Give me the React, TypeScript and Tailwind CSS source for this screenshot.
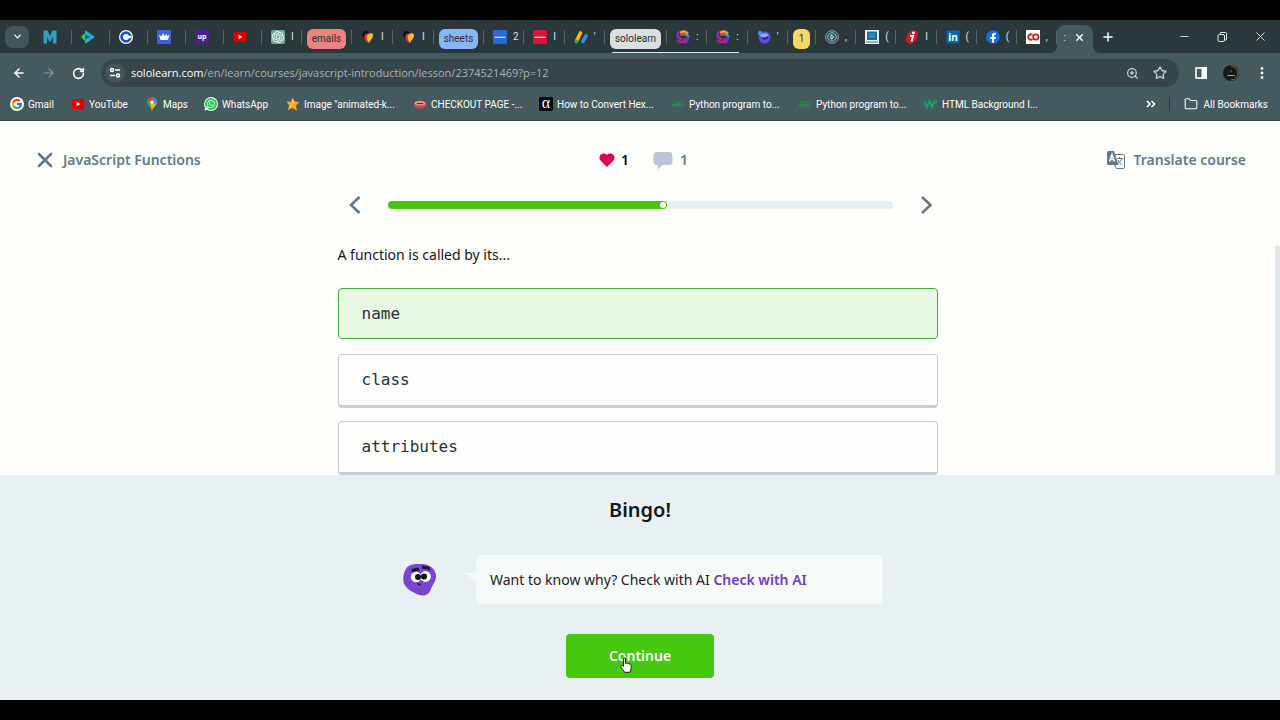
import React, { useState } from "react";
import {
  ArrowLeft,
  ArrowRight,
  ChevronDown,
  Folder,
  Minus,
  Plus,
  RotateCw,
  Star,
  X,
  ZoomIn,
} from "lucide-react";
import { FcGoogle } from "react-icons/fc";
import { FaFacebook, FaWhatsapp } from "react-icons/fa";
import { SiGeeksforgeeks, SiOpenai } from "react-icons/si";

interface Tab {
  id: string;
  icon: React.ReactNode;
  title?: string;
}

interface Bookmark {
  label: string;
  icon: React.ReactNode;
  width: string;
}

const YoutubeIcon = () => (
  <svg className="h-3.5 w-3.5" viewBox="0 0 14 14">
    <rect x="0.5" y="2" width="13" height="10" rx="2" fill="#e00000" />
    <path d="M5.6 4.8v4.4L9.4 7z" fill="#fff" />
  </svg>
);

const SololearnIcon = () => (
  <svg className="h-4 w-4" viewBox="0 0 16 16" fill="none" strokeWidth="2.8">
    <path d="M9.500 5.200C12 4.500 14 6 14.300 8.500" stroke="#2f9be8" />
    <path d="M4.500 3.200C7.500.8 11.500 1.200 13.500 4.300" stroke="#f5a030" />
    <path d="M3 2.500C.5 6 2.500 10.300 6.500 10.300" stroke="#8a2fc0" />
    <path d="M5.500 6.500c.8-2 3-2.500 4.500-1.500" stroke="#e8403c" />
    <path d="M13.500 8c1 3.500-1.500 6.300-4.500 6.300" stroke="#6a35dd" />
    <path d="M10 9.500c1 4-5.500 6-8.500 2" stroke="#c21c7e" />
  </svg>
);

const FlameIcon = () => (
  <svg className="h-3.5 w-3.5" viewBox="0 0 14 14">
    <path d="M2 2c2.500-2.500 5-1 6 1.500L5 9.500C2 8 0 5 2 2z" fill="#111" />
    <path d="M3.500 6c.5-2 3-3 5-2L8 13C5 12 3 9 3.500 6z" fill="#e2402f" />
    <path d="M6 6.500C7 3.500 9.500 2.500 12 4c.5 3.500-2 5.500-4 9C6.800 11 5.500 9 6 6.500z" fill="#f6b93f" />
  </svg>
);

const pinnedTabs: Tab[] = [
  {
    id: "m",
    icon: (
      <svg className="h-3.5 w-3.5" viewBox="0 0 14 14">
        <path d="M.5.500h4L7 6l2.500-5.500h4v13H10V7l-3 5.500L4 7v6.500H.5z" fill="#2f9fc4" />
      </svg>
    ),
  },
  {
    id: "play",
    icon: (
      <svg className="h-3.5 w-3.5" viewBox="0 0 14 14">
        <path d="M4 0l10 7-10 7z" fill="#2ea9cf" />
        <path d="M4 3v8L0 7z" fill="#2fd455" />
        <path d="M4 4.500L9 7 4 9.500z" fill="#14627a" />
      </svg>
    ),
  },
  {
    id: "coinbase",
    icon: (
      <svg className="h-3.5 w-3.5" viewBox="0 0 14 14">
        <circle cx="7" cy="7" r="7" fill="#fff" />
        <circle cx="7" cy="7" r="4.400" fill="none" stroke="#1652c8" strokeWidth="2.800" />
        <path d="M8 5.800h4.500v2.400H8z" fill="#fff" />
      </svg>
    ),
  },
  {
    id: "crown",
    icon: (
      <svg className="h-3.5 w-3.5" viewBox="0 0 14 14">
        <rect width="14" height="14" rx="1" fill="#3c64d8" />
        <path d="M2 4.500l2.500 2L6 3l1.500 3 2-2 .5 2.500 2.500-2L11 10H3.500z" fill="#fff" />
      </svg>
    ),
  },
  {
    id: "up",
    icon: (
      <svg className="h-3.5 w-3.5" viewBox="0 0 14 14">
        <rect width="14" height="14" rx="1" fill="#4d2083" />
        <text x="7" y="9" fill="#fff" fontSize="7" fontWeight="700" textAnchor="middle" fontFamily="Open Sans, sans-serif">
          up
        </text>
      </svg>
    ),
  },
  { id: "yt", icon: <YoutubeIcon /> },
];

const emailTabs: Tab[] = [
  { id: "e1", icon: <FlameIcon />, title: "I" },
  { id: "e2", icon: <FlameIcon />, title: "I" },
];

const sheetTabs: Tab[] = [
  {
    id: "s1",
    icon: (
      <svg className="h-3.5 w-3.5" viewBox="0 0 14 14">
        <rect width="14" height="14" rx="1" fill="#2868d8" />
        <path d="M1.500 7.300h11" stroke="#dfe9fb" strokeWidth="1.200" />
      </svg>
    ),
    title: "2",
  },
  {
    id: "s2",
    icon: (
      <svg className="h-3.5 w-3.5" viewBox="0 0 14 14">
        <rect width="14" height="14" rx="1" fill="#d9143f" />
        <path d="M1.500 7.300h11" stroke="#fbdfe6" strokeWidth="1.200" />
      </svg>
    ),
    title: "I",
  },
  {
    id: "s3",
    icon: (
      <svg className="h-3.5 w-3.5" viewBox="0 0 14 14" strokeLinecap="round" strokeWidth="3.600">
        <path d="M2.500 11l4-8" stroke="#fbbc04" />
        <path d="M9 11.500l3-5.500" stroke="#4285f4" />
        <circle cx="2.500" cy="11.500" r="1.900" fill="#34a853" />
      </svg>
    ),
    title: "'",
  },
];

const sololearnTabs: Tab[] = [
  { id: "l1", icon: <SololearnIcon />, title: ":" },
  { id: "l2", icon: <SololearnIcon />, title: ":" },
  {
    id: "l3",
    icon: (
      <svg className="h-3.5 w-3.5" viewBox="0 0 14 14">
        <circle cx="7.500" cy="7.500" r="6" fill="#5b4fe0" />
        <circle cx="3" cy="3" r="2.200" fill="#4a8df0" />
        <path d="M3 5.500C5 3 9 2.500 11.500 4.500 10 7.500 5 8 3 5.500z" fill="#79b4ff" />
        <path d="M4.500 7.500c2 1 4.500.5 6.500-1 .5 3.500-5.500 4.500-6.500 1z" fill="#2b1b80" />
      </svg>
    ),
    title: "'",
  },
];

const otherTabs: Tab[] = [
  {
    id: "o1",
    icon: (
      <svg className="h-3.5 w-3.5" viewBox="0 0 14 14" fill="none">
        <circle cx="7" cy="7" r="6.300" stroke="#8fb2b9" />
        <circle cx="7" cy="7" r="4.200" fill="#1d5566" stroke="#9fc8d0" />
        <path d="M6 5v4c3 .3 3-4.300 0-4z" stroke="#e2f0f2" />
      </svg>
    ),
    title: ",",
  },
  {
    id: "o2",
    icon: (
      <svg className="h-3.5 w-3.5" viewBox="0 0 14 14">
        <rect width="14" height="14" fill="#e9f1f5" />
        <rect x="2" y="1.500" width="10" height="8.500" fill="#176da8" />
        <path d="M4 4h6M4 6.500h6" stroke="#5c9dc9" />
        <path d="M1 12h12" stroke="#2b7cb4" />
      </svg>
    ),
    title: "(",
  },
  {
    id: "o3",
    icon: (
      <svg className="h-3.5 w-3.5" viewBox="0 0 14 14">
        <ellipse cx="7" cy="7" rx="5.200" ry="7.400" transform="rotate(35 7 7)" fill="#cc1c22" />
        <path d="M5 6h3l-1.500 5.500" fill="none" stroke="#fff" strokeWidth="2" />
        <circle cx="8.500" cy="3" r="1.400" fill="#fff" />
      </svg>
    ),
    title: "I",
  },
  {
    id: "in",
    icon: (
      <svg className="h-3.5 w-3.5" viewBox="0 0 14 14">
        <rect x="0.5" y="0.5" width="13" height="13" rx="1" fill="#0a66b8" />
        <text x="7" y="11" fill="#fff" fontSize="10" fontWeight="700" textAnchor="middle" fontFamily="Open Sans, sans-serif">
          in
        </text>
      </svg>
    ),
    title: "(",
  },
  {
    id: "fb",
    icon: (
      <svg className="h-3.5 w-3.5" viewBox="0 0 14 14">
        <circle cx="7" cy="7" r="6" fill="#fff" />
        <FaFacebook size={14} color="#1769e0" />
      </svg>
    ),
    title: "(",
  },
  {
    id: "co",
    icon: (
      <svg className="h-3.5 w-3.5" viewBox="0 0 14 14" fill="none">
        <rect width="14" height="14" fill="#fff" />
        <path d="M6.500 4.800a2.700 2.700 0 1 0 0 4.400" stroke="#cf2028" strokeWidth="1.800" />
        <circle cx="9.800" cy="7" r="2.700" stroke="#cf2028" strokeWidth="1.800" />
      </svg>
    ),
    title: ",",
  },
];

const bookmarks: Bookmark[] = [
  {
    label: "Gmail",
    width: "w-[61px]",
    icon: (
      <span className="rounded-full bg-white p-px">
        <FcGoogle className="h-3 w-3" />
      </span>
    ),
  },
  { label: "YouTube", width: "w-[74px]", icon: <YoutubeIcon /> },
  {
    label: "Maps",
    width: "w-[59px]",
    icon: (
      <svg className="h-3.5 w-3.5" viewBox="0 0 14 14">
        <path d="M7 .5C4 .5 2.200 2.700 2.200 5.200c0 3.300 3.300 4.300 4.800 8.300z" fill="#34a853" />
        <path d="M7 .5c3 0 4.800 2.200 4.800 4.700 0 3.300-3.300 4.300-4.800 8.300L5.500 8z" fill="#fbbc04" />
        <path d="M7 .5C5 .5 3.500 1.300 2.800 2.800L6 5.500l3-4.600z" fill="#ea4335" />
        <path d="M9 .9C11 1.600 12 3.600 11.700 6L8 7l-1-3z" fill="#4285f4" />
        <circle cx="7" cy="5.200" r="1.700" fill="#fff" />
      </svg>
    ),
  },
  {
    label: "WhatsApp",
    width: "w-[82px]",
    icon: (
      <svg className="h-3.5 w-3.5" viewBox="0 0 14 14">
        <circle cx="7" cy="7" r="7" fill="#f2fff5" />
        <circle cx="7" cy="7" r="6" fill="#2fc655" />
        <path d="M.5 13.500l1-4 3 3z" fill="#f2fff5" />
        <FaWhatsapp x="2.500" y="2.500" size={9} color="#fff" />
      </svg>
    ),
  },
  {
    label: "Image \"animated-k...",
    width: "w-[127px]",
    icon: (
      <svg className="h-3.5 w-3.5" viewBox="0 0 14 14">
        <path d="M6.500.5l2 4 5 .5-3.500 3.500 1 5-4.500-2.500L2 13l1-4.500L.5 4.500l4.500.200z" fill="#f9a825" />
        <path d="M6.500 3l1 3-3.500 4" stroke="#ffe07a" fill="none" />
      </svg>
    ),
  },
  {
    label: "CHECKOUT PAGE -...",
    width: "w-[126px]",
    icon: (
      <svg className="h-3.5 w-3.5" viewBox="0 0 14 14">
        <ellipse cx="7" cy="7.500" rx="6.500" ry="4" fill="#d7464f" />
        <ellipse cx="7" cy="6.200" rx="5" ry="2" fill="#f3b8b8" />
        <path d="M3.500 6.500h7" stroke="#a01824" strokeWidth="1.500" />
      </svg>
    ),
  },
  {
    label: "How to Convert Hex...",
    width: "w-[132px]",
    icon: (
      <span className="h-3.5 w-3.5 rounded-xs bg-black text-center font-['Liberation_Serif',serif] text-base leading-[12px]">
        α
      </span>
    ),
  },
  {
    label: "Python program to...",
    width: "w-[127px]",
    icon: <SiGeeksforgeeks className="h-3 w-3 text-[#2f8d46]" />,
  },
  {
    label: "Python program to...",
    width: "w-[126px]",
    icon: <SiGeeksforgeeks className="h-3 w-3 text-[#2f8d46]" />,
  },
  {
    label: "HTML Background I...",
    width: "w-[120px]",
    icon: (
      <svg className="h-3.5 w-3.5" viewBox="0 0 14 14" fill="none" stroke="#12a56a">
        <path d="M0 4l3 6 2.500-6L8 10l2.500-6" strokeWidth="2" />
        <path d="M11 3h2l-1 1.500c1.500 0 1.500 2-.5 1.800" />
      </svg>
    ),
  },
];

const TabGroup: React.FC<{ tabs: Tab[]; className: string }> = ({ tabs, className }) => (
  <div className={`grid h-full shrink-0 ${className}`}>
    {tabs.map((tab) => (
      <button
        key={tab.id}
        aria-label={`Tab ${tab.id}`}
        className="relative flex items-center gap-1.5 pl-[9px] text-[10px] text-[#dfe6e7]"
      >
        <span className="flex w-3.5 shrink-0 justify-center">{tab.icon}</span>
        {tab.title && <span>{tab.title}</span>}
        <span className="absolute right-0 h-3.5 w-px bg-[#566466]" />
      </button>
    ))}
  </div>
);

const GroupLabel: React.FC<{ name: string; className: string; underline?: boolean }> = ({
  name,
  className,
  underline,
}) => (
  <div className="relative flex h-full shrink-0 items-center pt-1 pr-1.5 pl-[5px]">
    <button className={`h-5 rounded-md text-center text-[10px] leading-5 text-[#2c2c2c] ${className}`}>
      {name}
    </button>
    <span className="absolute top-[10px] right-0 h-3.5 w-px bg-[#566466]" />
    {underline && <span className="absolute bottom-0 left-[7px] h-px w-[127px] bg-[#dfe6e7]" />}
  </div>
);

const TabStrip = () => (
  <div className="flex h-[33px] items-center overflow-hidden bg-[#2b383b] pl-[5px]">
    <button
      aria-label="Search tabs"
      className="mr-px flex h-[22px] w-6 shrink-0 items-center justify-center rounded-lg bg-[#43565a] text-white"
    >
      <ChevronDown size={11} strokeWidth={3} />
    </button>
    <TabGroup tabs={pinnedTabs} className="w-[232px] grid-cols-6 pl-1" />
    <TabGroup
      tabs={[
        {
          id: "gpt",
          title: "I",
          icon: (
            <span className="flex h-3.5 w-3.5 items-center justify-center rounded-xs bg-[#74aa9c]">
              <SiOpenai className="h-3 w-3 text-white" />
            </span>
          ),
        },
      ]}
      className="w-10"
    />
    <GroupLabel name="emails" className="w-[39px] bg-[#ee8282]" />
    <TabGroup tabs={emailTabs} className="w-[82px] grid-cols-2" />
    <GroupLabel name="sheets" className="w-[39px] bg-[#8ab4f8]" />
    <TabGroup tabs={sheetTabs} className="w-[121px] grid-cols-3" />
    <GroupLabel name="sololearn" className="w-[51px] bg-[#dadfe0]" underline />
    <TabGroup tabs={sololearnTabs} className="w-[121px] grid-cols-3" />
    <GroupLabel name="1" className="w-[17px] bg-[#fdd663]" />
    <TabGroup tabs={otherTabs} className="w-[241px] grid-cols-6" />
    <div className="relative mt-[5px] flex h-7 w-9 shrink-0 items-center justify-end gap-2 rounded-t-lg bg-[#455a5e] pr-2 pb-1 text-white">
      <span className="text-[10px] text-[#dfe6e7]">:</span>
      <button aria-label="Close tab">
        <X size={11} strokeWidth={3} />
      </button>
      <svg className="absolute bottom-0 -left-2 h-2 w-2" viewBox="0 0 8 8">
        <path d="M8 0v8H0c5 0 8-3 8-8z" fill="#455a5e" />
      </svg>
      <svg className="absolute -right-2 bottom-0 h-2 w-2" viewBox="0 0 8 8">
        <path d="M0 0v8h8C3 8 0 5 0 0z" fill="#455a5e" />
      </svg>
    </div>
    <button aria-label="New tab" className="ml-2 shrink-0 text-white">
      <Plus size={14} strokeWidth={2.5} />
    </button>
    <div className="ml-auto flex shrink-0 items-center gap-6 pr-3 text-[#e4eaea]">
      <button aria-label="Minimize">
        <Minus size={13} strokeWidth={1.5} />
      </button>
      <button aria-label="Restore">
        <svg className="h-3.5 w-3.5" viewBox="0 0 14 14" fill="none" stroke="currentColor">
          <rect x="3" y="4.500" width="6.500" height="7" rx="1.500" />
          <path d="M5 4V3.500A1 1 0 0 1 6 2.500h4.500a1 1 0 0 1 1 1V9a1 1 0 0 1-1 1H10" />
        </svg>
      </button>
      <button aria-label="Close">
        <X size={15} strokeWidth={1.5} />
      </button>
    </div>
  </div>
);

const Toolbar = () => (
  <div className="flex h-[38px] items-center bg-[#455a5e] pt-0.5 pr-[11px] pl-3 text-white">
    <button aria-label="Back">
      <ArrowLeft size={14} strokeWidth={2.5} />
    </button>
    <button aria-label="Forward" className="ml-4 text-[#8b9a9d]">
      <ArrowRight size={14} strokeWidth={2} />
    </button>
    <button aria-label="Reload" className="ml-4">
      <RotateCw size={13} strokeWidth={3} />
    </button>
    <div className="ml-4 flex h-7 min-w-0 flex-1 items-center rounded-full bg-[#37464a] pr-3 pl-1">
      <button
        aria-label="Site information"
        className="flex h-5 w-5 shrink-0 items-center justify-center rounded-full bg-[#455559]"
      >
        <svg className="h-3 w-3" viewBox="0 0 12 12" fill="none" stroke="#fff" strokeWidth="1.500">
          <circle cx="3" cy="3" r="1.500" />
          <path d="M6 3h5M1 8.500h5" />
          <circle cx="9" cy="8.500" r="1.500" />
        </svg>
      </button>
      <div className="ml-1.5 truncate font-['Open_Sans',sans-serif] text-[11px] text-[#a9b4b6]">
        <span className="text-white">sololearn.com</span>
        /en/learn/courses/javascript-introduction/lesson/2374521469?p=12
      </div>
      <button aria-label="Zoom" className="ml-auto text-[#ccd4d5]">
        <ZoomIn size={13} strokeWidth={2.2} />
      </button>
      <button aria-label="Bookmark this page" className="ml-3.5 text-[#ccd4d5]">
        <Star size={14} strokeWidth={2.2} />
      </button>
    </div>
    <button aria-label="Side panel" className="ml-4">
      <svg className="h-3 w-3" viewBox="0 0 12 12">
        <rect x="1" y="1" width="10" height="10" fill="none" stroke="#fff" strokeWidth="1.600" />
        <path d="M6.500 0H12v12H6.500z" fill="#fff" />
      </svg>
    </button>
    <button aria-label="Profile" className="ml-4">
      <svg className="h-4 w-4" viewBox="0 0 16 16">
        <circle cx="8" cy="8" r="8" fill="#191a17" />
        <path d="M8 1a7 7 0 0 1 0 14" fill="none" stroke="#7e7a3a" />
        <path d="M4.500 10.500h7" stroke="#a8a8a0" />
        <path d="M7 6h2" stroke="#666" />
      </svg>
    </button>
    <button aria-label="Menu" className="ml-4">
      <svg className="h-3.5 w-3.5" viewBox="0 0 14 14" fill="#fff">
        <circle cx="7" cy="2.500" r="1.400" />
        <circle cx="7" cy="7" r="1.400" />
        <circle cx="7" cy="11.500" r="1.400" />
      </svg>
    </button>
  </div>
);

const BookmarksBar = () => (
  <nav className="flex h-[30px] items-center border-b border-[#38494c] bg-[#455a5e] pr-3 pb-[3px] pl-[10px] text-[10px] text-white">
    {bookmarks.map((bookmark, i) => (
      <a
        key={i}
        href="#"
        className={`flex shrink-0 items-center gap-1 whitespace-nowrap ${bookmark.width}`}
      >
        <span className="flex w-3.5 shrink-0 justify-center">{bookmark.icon}</span>
        {bookmark.label}
      </a>
    ))}
    <div className="ml-auto flex shrink-0 items-center">
      <button aria-label="More bookmarks">
        <svg className="h-3 w-3" viewBox="0 0 12 12" fill="none" stroke="#fff" strokeWidth="1.600">
          <path d="M2 3l3 3-3 3M6.500 3l3 3-3 3" />
        </svg>
      </button>
      <span className="mr-3.5 ml-3 h-3.5 w-px bg-[#2b383b]" />
      <a href="#" className="flex items-center gap-1.5 whitespace-nowrap">
        <Folder size={14} strokeWidth={1.8} />
        All Bookmarks
      </a>
    </div>
  </nav>
);

const LessonHeader = () => (
  <header className="grid grid-cols-3 items-center pt-[27px] pr-[34px] pl-[37px] text-sm leading-6 font-semibold text-[#607d8b]">
    <div className="flex items-center gap-2.5">
      <button aria-label="Close lesson">
        <svg className="h-4 w-4" viewBox="0 0 16 16" stroke="#607a8b" strokeWidth="2.600" strokeLinecap="round">
          <path d="M2 2l12 12M14 2L2 14" />
        </svg>
      </button>
      <span>JavaScript Functions</span>
    </div>
    <div className="flex items-center justify-center pl-1">
      <svg className="h-4 w-4" viewBox="0 0 16 16">
        <path d="M8 15L1.500 8.500C-2 4 4-1 8 3c4-4 10 1 6.500 5.500z" fill="#dd0055" />
      </svg>
      <span className="ml-1.5 text-black">1</span>
      <svg className="mt-0.5 ml-6 h-[18px] w-5" viewBox="0 0 20 18">
        <path d="M4 0h12a3.500 3.500 0 0 1 3.500 3.500v6A3.500 3.500 0 0 1 16 13H9.500L5 17.500V13H4A3.500 3.500 0 0 1 .5 9.500v-6A3.500 3.500 0 0 1 4 0z" fill="#bcc5d6" />
      </svg>
      <span className="ml-[7px]">1</span>
    </div>
    <a href="#" className="flex items-center gap-2 justify-self-end">
      <svg className="h-[18px] w-[18px]" viewBox="0 0 18 18" fill="none" stroke="#607a8b">
        <path d="M8 3.500h8.500a1 1 0 0 1 1 1v12a1 1 0 0 1-1 1h-7L7 13" />
        <path d="M1.500 0H7l4.500 14h-10A1.500 1.500 0 0 1 0 12.500v-11A1.500 1.500 0 0 1 1.500 0z" fill="#607a8b" stroke="none" />
        <path d="M2.500 10.500L5 3.500l2.500 7M3.300 8.500h3.400" stroke="#fff" strokeWidth="1.500" />
        <path d="M10 7.500h6M12.500 6v1.500M14.500 7.500c-.5 2.500-2 4-4 5.500M11 9c.8 2 2.500 3.500 4 4.500" />
      </svg>
      Translate course
    </a>
  </header>
);

const options = ["name", "class", "attributes"];

const Lesson = () => {
  const [selected, setSelected] = useState("name");

  return (
    <main className="relative flex-1 overflow-hidden bg-[#fefefb]">
      <LessonHeader />
      <div className="pr-[5px]">
        <div className="mx-auto flex max-w-[600px] items-center pt-[23px] pr-1 pl-2.5">
          <button aria-label="Previous">
            <svg className="h-5 w-3.5" viewBox="0 0 14 20" fill="none" stroke="#607a8b" strokeWidth="2.600">
              <path d="M11.500 2L3 10l8.500 8" />
            </svg>
          </button>
          <div
            role="progressbar"
            aria-label="Lesson progress"
            aria-valuenow={55}
            className="mr-[27px] ml-[26px] h-2 flex-1 rounded-full bg-[#e8eff1]"
          >
            <div
              className="flex h-2 items-center justify-end rounded-full bg-[#48c50f] pr-px"
              style={{ width: "55.300%" }}
            >
              <span className="h-1.5 w-1.5 rounded-full bg-white" />
            </div>
          </div>
          <button aria-label="Next">
            <svg className="h-5 w-3.5" viewBox="0 0 14 20" fill="none" stroke="#6b7785" strokeWidth="2.600">
              <path d="M2 2l8.500 8L2 18" />
            </svg>
          </button>
        </div>
        <div className="mx-auto max-w-[600px] pt-7">
          <p className="text-sm leading-6 text-[#14171a]">A function is called by its...</p>
          <div className="mt-[21px] flex flex-col gap-[13px]">
            {options.map((option) => (
              <button
                key={option}
                onClick={() => setSelected(option)}
                className={
                  option === selected
                    ? "mb-0.5 h-[51px] rounded-sm border border-[#3fae36] bg-[#e9f8e3] px-[23px] text-left font-['DejaVu_Sans_Mono',monospace] text-base text-[#26323a]"
                    : "h-[54px] rounded-sm border border-b-3 border-[#c4ced6] bg-[#fefefd] px-[23px] text-left font-['DejaVu_Sans_Mono',monospace] text-base text-[#26323a]"
                }
              >
                {option}
              </button>
            ))}
          </div>
        </div>
      </div>
      {/* scrollbar thumb */}
      <div className="absolute top-[124px] right-0 bottom-0 w-[5px] rounded-t bg-[#dee5e6]" />
    </main>
  );
};

const Mascot = () => (
  <svg className="h-[34px] w-[34px]" viewBox="0 0 34 34">
    <path d="M5 3.500C9 .5 14 1 18 1c8-.5 15 5 15 12 0 6-3.500 8.500-5 13-1.500 4.500-5 7-9 6.500C12 31.500 1.500 25 .5 19-.3 13 1.500 6.500 5 3.500z" fill="#7a45cf" />
    <path d="M8.500 6l7-1.500 1 2.800-7.500 2z" fill="#140f2a" />
    <path d="M19 2.500l7.500 1.500 1 3-8.500-1.500z" fill="#140f2a" />
    <circle cx="13" cy="14" r="5.200" fill="#fff" />
    <circle cx="22.500" cy="13.500" r="5.400" fill="#fff" />
    <circle cx="15" cy="14" r="3" fill="#101018" />
    <circle cx="21" cy="13.500" r="3" fill="#101018" />
    <path d="M14.500 20.500c1 .8 2 .8 3 .5l-1.500 1.300z" fill="#1b0d45" stroke="#1b0d45" />
  </svg>
);

const HandCursor = () => (
  <svg className="pointer-events-none absolute top-[23px] left-[54px] h-4 w-3" viewBox="0 0 12 16">
    <path
      d="M3.500 9.500V2a1 1 0 0 1 2 0v4.500c.3-.8 1.800-.7 2 .3.500-.6 1.700-.4 1.800.5.500-.5 1.900-.3 1.900.8V11c0 1.500-1 2.500-1.200 4.300H4.500C4 13.500 2 12 .8 9.700.4 8.500 2 8 2.700 8.800z"
      fill="#fff"
      stroke="#111"
      strokeWidth=".9"
    />
  </svg>
);

const ResultPanel = () => (
  <footer className="flex flex-col items-center bg-[#e9f0f4] px-4 pt-[19px] pb-[22px]">
    <h2 className="text-xl leading-8 font-semibold text-[#14171a]">Bingo!</h2>
    <div className="mt-[29px] flex w-full max-w-[486px] items-center gap-[39px] pl-1.5">
      <Mascot />
      <div className="relative flex-1 rounded-md bg-[#f6faf9] px-3.5 py-3 text-sm leading-[25px] text-[#1d2226]">
        <svg className="absolute top-4 -left-3 h-3 w-3" viewBox="0 0 12 12">
          <path d="M0 2h12v9C8 9 6 4 0 2z" fill="#f6faf9" />
        </svg>
        Want to know why? Check with AI{" "}
        <a href="#" className="font-semibold text-[#6d3cc9]">
          Check with AI
        </a>
      </div>
    </div>
    <button className="relative mt-[30px] h-11 w-[148px] rounded bg-[#46c80e] text-sm font-semibold text-white">
      Continue
      <HandCursor />
    </button>
  </footer>
);

const App: React.FC = () => {
  return (
    <div className="flex min-h-screen flex-col bg-black py-5 font-['Noto_Sans',sans-serif]">
      <div className="font-[Roboto,sans-serif]">
        <TabStrip />
        <Toolbar />
        <BookmarksBar />
      </div>
      <Lesson />
      <ResultPanel />
    </div>
  );
};

export default App;
